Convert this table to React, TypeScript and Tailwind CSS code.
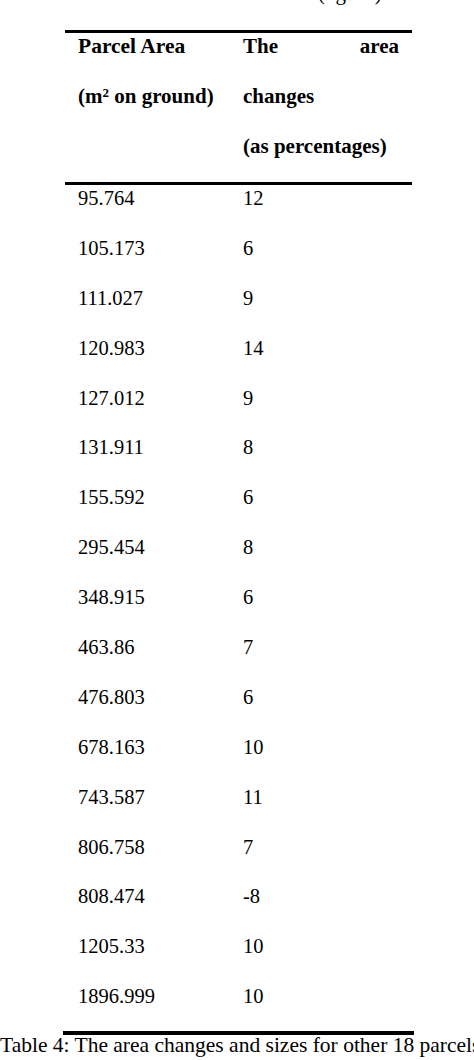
const rows: [string, string][] = [
  ["95.764", "12"],
  ["105.173", "6"],
  ["111.027", "9"],
  ["120.983", "14"],
  ["127.012", "9"],
  ["131.911", "8"],
  ["155.592", "6"],
  ["295.454", "8"],
  ["348.915", "6"],
  ["463.86", "7"],
  ["476.803", "6"],
  ["678.163", "10"],
  ["743.587", "11"],
  ["806.758", "7"],
  ["808.474", "-8"],
  ["1205.33", "10"],
  ["1896.999", "10"],
];

export default function App() {
  return (
    <div className="w-[474px] h-[1060px] overflow-hidden bg-white text-black font-['Liberation_Serif',serif]">
      {/* tail of the line above, cut off by the page edge */}
      <div className="h-[30px] overflow-hidden">
        <p className="-mt-[19px] pl-[318px] text-[21px] leading-[24px] whitespace-nowrap">
          (kg/m<sup className="text-[13px]">2</sup>)
        </p>
      </div>

      <div className="ml-[65px] w-[347px]">
        <div className="h-[3px] bg-black" />

        <div className="grid grid-cols-[166px_181px] h-[149px] font-bold text-[21px] leading-[26px]">
          <div className="pl-[13px]">
            <div className="h-[50px] text-[21.5px]">Parcel Area</div>
            <div className="h-[50px] whitespace-nowrap">
              (m<sup className="text-[13px]">2</sup> on ground)
            </div>
          </div>
          <div className="pl-[12px] pr-[13px]">
            <div className="h-[50px] flex justify-between">
              <span>The</span>
              <span>area</span>
            </div>
            <div className="h-[50px]">changes</div>
            <div className="h-[50px] whitespace-nowrap">(as percentages)</div>
          </div>
        </div>

        <div className="h-[3px] bg-black" />

        <div className="h-[846px] overflow-hidden text-[20.5px] leading-[26px]">
          {rows.map(([area, change]) => (
            <div key={area} className="grid grid-cols-[166px_181px] h-[49.9px]">
              <div className="pl-[13px]">{area}</div>
              <div className="pl-[12px]">{change}</div>
            </div>
          ))}
        </div>

        <div className="h-[4px] -mx-[2px] bg-black" />
      </div>

      <p className="text-[21.5px] leading-[20px] whitespace-nowrap">
        Table 4: The area changes and sizes for other 18 parcels
      </p>
    </div>
  );
}
